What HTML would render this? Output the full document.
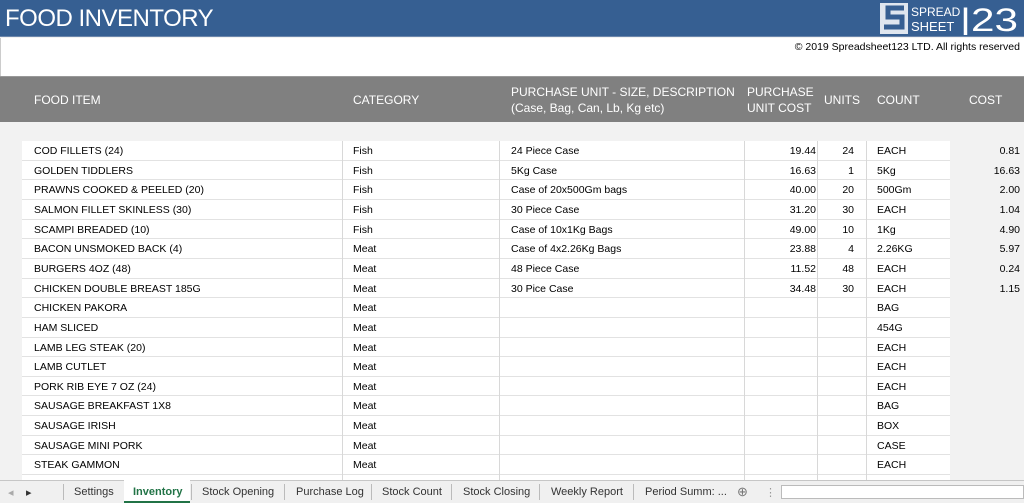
<!DOCTYPE html>
<html><head><style>
*{margin:0;padding:0;box-sizing:border-box}
body{width:1024px;height:503px;overflow:hidden;background:#f2f2f2;font-family:"Liberation Sans",Arial,sans-serif;position:relative}
.top{position:absolute;left:0;top:0;width:1024px;height:37px;background:#365f92;border-bottom:1px solid #6b86ab}
.title{position:absolute;left:5px;top:5px;color:#fff;font-size:24px;letter-spacing:-0.5px}
.white{position:absolute;left:0;top:38px;width:1024px;height:38px;background:#fff;border-left:1px solid #ccc}
.copy{position:absolute;right:4px;top:41px;font-size:10.5px;color:#000}
.hdr{position:absolute;left:0;top:76px;width:1024px;height:46px;background:#808080;color:#fff;font-size:12px;border-top:1px solid #999}
.hdr div{position:absolute;line-height:16px}
.row{position:absolute;left:22px;width:928px;height:20px;background:#fff;border-bottom:1px solid #e2e2e2;font-size:10.5px}
.row span{position:absolute;top:4px;white-space:nowrap}
.c{position:absolute;top:0;height:20px;border-left:1px solid #d8d8d8}
.cost{position:absolute;left:950px;width:70px;font-size:10.5px;text-align:right}
.tabs{position:absolute;left:0;top:480px;width:1024px;height:23px;background:#f0f0f0;border-top:1px solid #c6c6c6;font-size:11px;color:#333}
.tabs span{position:absolute;top:5px;white-space:nowrap}
.sep{position:absolute;top:3px;width:1px;height:16px;background:#bbb}
</style></head><body>
<div class="top"><div class="title">FOOD INVENTORY</div>
<svg style="position:absolute;left:878px;top:2px" width="142" height="33" viewBox="0 0 142 33">
<rect x="2" y="1" width="28" height="31" fill="#dfe6ef"/>
<path d="M26 6H10v9h14v10H6" stroke="#365f92" stroke-width="5" fill="none"/>
<text x="33" y="14" font-family="Liberation Sans" font-size="12" fill="#fff">SPREAD</text>
<text x="33" y="29" font-family="Liberation Sans" font-size="13" fill="#fff">SHEET</text>
<text x="82" y="29" font-family="Liberation Sans" font-size="32" fill="#fff" textLength="58" lengthAdjust="spacingAndGlyphs">|23</text>
</svg></div>
<div class="white"></div>
<div class="copy">© 2019 Spreadsheet123 LTD. All rights reserved</div>
<div class="hdr">
<div style="left:34px;top:15px">FOOD ITEM</div>
<div style="left:353px;top:15px">CATEGORY</div>
<div style="left:511px;top:7px">PURCHASE UNIT - SIZE, DESCRIPTION<br>(Case, Bag, Can, Lb, Kg etc)</div>
<div style="left:747px;top:7px">PURCHASE<br>UNIT COST</div>
<div style="left:824px;top:15px">UNITS</div>
<div style="left:877px;top:15px">COUNT</div>
<div style="left:969px;top:15px">COST</div>
</div>
<div id="rows"></div>
<script>
var d=[["COD FILLETS (24)","Fish","24 Piece Case","19.44","24","EACH","0.81"],
["GOLDEN TIDDLERS","Fish","5Kg Case","16.63","1","5Kg","16.63"],
["PRAWNS COOKED & PEELED (20)","Fish","Case of 20x500Gm bags","40.00","20","500Gm","2.00"],
["SALMON FILLET SKINLESS (30)","Fish","30 Piece Case","31.20","30","EACH","1.04"],
["SCAMPI BREADED (10)","Fish","Case of 10x1Kg Bags","49.00","10","1Kg","4.90"],
["BACON UNSMOKED BACK (4)","Meat","Case of 4x2.26Kg Bags","23.88","4","2.26KG","5.97"],
["BURGERS 4OZ (48)","Meat","48 Piece Case","11.52","48","EACH","0.24"],
["CHICKEN DOUBLE BREAST 185G","Meat","30 Pice Case","34.48","30","EACH","1.15"],
["CHICKEN PAKORA","Meat","","","","BAG",""],
["HAM SLICED","Meat","","","","454G",""],
["LAMB LEG STEAK (20)","Meat","","","","EACH",""],
["LAMB CUTLET","Meat","","","","EACH",""],
["PORK RIB EYE 7 OZ (24)","Meat","","","","EACH",""],
["SAUSAGE BREAKFAST 1X8","Meat","","","","BAG",""],
["SAUSAGE IRISH","Meat","","","","BOX",""],
["SAUSAGE MINI PORK","Meat","","","","CASE",""],
["STEAK GAMMON","Meat","","","","EACH",""],
["","","","","","",""]];
var h="";
d.forEach(function(r,i){var t=Math.round(141+i*19.65);var n=Math.round(141+(i+1)*19.65);var ht=n-t;
h+='<div class="row" style="top:'+t+'px;height:'+ht+'px"><span style="left:12px">'+r[0].replace("&","&amp;")+'</span><div class="c" style="left:320px;height:'+ht+'px"></div><span style="left:331px">'+r[1]+'</span><div class="c" style="left:477px;height:'+ht+'px"></div><span style="left:489px">'+r[2]+'</span><div class="c" style="left:722px;height:'+ht+'px"></div><span style="right:134px">'+r[3]+'</span><div class="c" style="left:795px;height:'+ht+'px"></div><span style="right:96px">'+r[4]+'</span><div class="c" style="left:844px;height:'+ht+'px"></div><span style="left:855px">'+r[5]+'</span></div>';
if(r[6])h+='<div class="cost" style="top:'+(t+4)+'px">'+r[6]+'</div>';});
document.getElementById("rows").innerHTML=h;
</script>
<div class="tabs">
<span style="left:8px;color:#aaa">◂</span><span style="left:26px">▸</span>
<div class="sep" style="left:63px"></div><span style="left:74px">Settings</span>
<div style="position:absolute;left:124px;top:-1px;width:66px;height:23px;background:#fff;border-bottom:2px solid #217346"></div><span style="left:133px;color:#217346;font-weight:bold">Inventory</span>
<div class="sep" style="left:191px"></div><span style="left:202px">Stock Opening</span>
<div class="sep" style="left:284px"></div><span style="left:296px">Purchase Log</span>
<div class="sep" style="left:371px"></div><span style="left:382px">Stock Count</span>
<div class="sep" style="left:451px"></div><span style="left:463px">Stock Closing</span>
<div class="sep" style="left:539px"></div><span style="left:551px">Weekly Report</span>
<div class="sep" style="left:633px"></div><span style="left:645px">Period Summ: ...</span>
<span style="left:737px;top:3px;font-size:13px;color:#777">⊕</span>
<span style="left:765px;color:#999">⋮</span>
<div style="position:absolute;left:781px;top:4px;width:243px;height:14px;background:#fff;border:1px solid #bbb"></div>
</div>
</body></html>
